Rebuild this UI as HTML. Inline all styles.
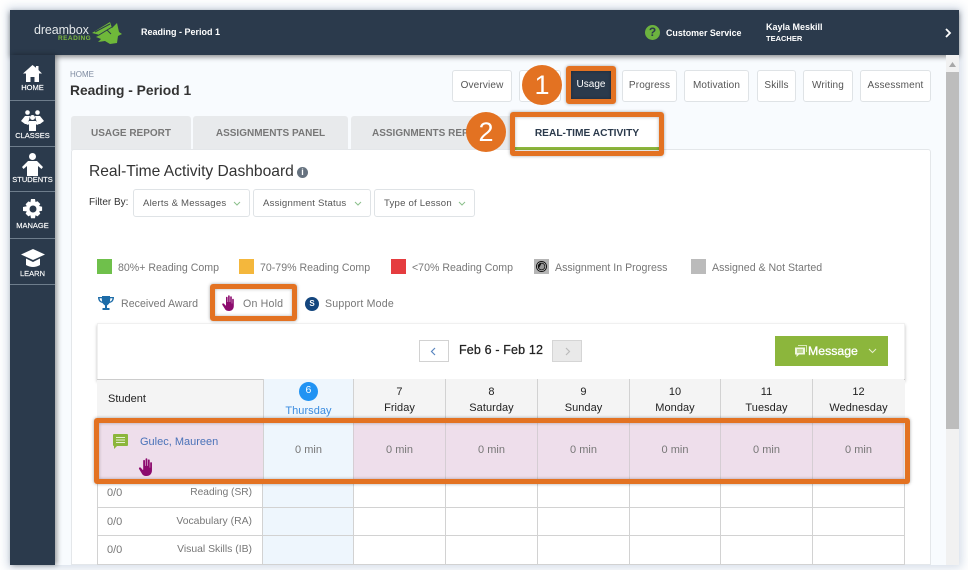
<!DOCTYPE html>
<html><head><meta charset="utf-8">
<style>
*{box-sizing:border-box}
html,body{margin:0;padding:0;width:968px;height:570px;overflow:hidden;background:#fff}
body{position:relative;font-family:"Liberation Sans",sans-serif;color:#555}
#w{position:absolute;left:0;top:0;width:968px;height:570px;filter:blur(.25px)}
.a{position:absolute}
.t{position:absolute;white-space:nowrap;line-height:16px}
.btn{position:absolute;top:70px;height:32px;background:#fff;border:1px solid #dfe3e6;border-radius:3px;font-size:10px;line-height:29px;text-align:center;color:#555;letter-spacing:.15px}
.tab{position:absolute;top:116px;height:34px;background:#e8eaec;border-radius:3px 3px 0 0;font-size:10px;font-weight:bold;line-height:36px;text-align:center;color:#777}
.side{position:absolute;left:10px;width:45px;color:#fff;font-size:7.5px;text-align:center;border-bottom:1px solid #6e7d8c;-webkit-text-stroke:.15px #fff}
.side span{position:absolute;left:0;right:0}
.f{position:absolute;top:189px;height:28px;background:#fff;border:1px solid #dfe3e6;border-radius:3px;font-size:9.6px;line-height:27px;color:#555;padding-left:9px;letter-spacing:.2px}
.f svg{position:absolute;top:11px}
.sw{position:absolute;top:259px;width:15px;height:15px}
.lg{position:absolute;top:260px;font-size:10.6px;line-height:16px;color:#777;white-space:nowrap}
.o{position:absolute;border:5px solid #e37222;border-radius:3px;box-shadow:0 0 3px rgba(0,0,0,.35),inset 0 0 3px rgba(0,0,0,.3)}
.c{position:absolute;width:40px;height:40px;border-radius:50%;background:#e37222;color:#fff;font-size:27px;line-height:40px;text-align:center}
.hc{position:absolute;top:379px;height:44px;background:#f4f4f4;border-left:1px solid #d2d2d2;text-align:center;font-size:11px;line-height:16px;color:#222;padding-top:5px;letter-spacing:.05px}
.pc{position:absolute;top:423px;height:60px;background:#eedeeb;border-left:1px solid #d5cdd3;text-align:center;font-size:11px;line-height:54px;color:#777}
.vl{position:absolute;top:483px;height:82px;width:1px;background:#d2d2d2}
.hl{position:absolute;left:97px;width:808px;height:1px;background:#d2d2d2}
</style></head>
<body>
<div id="w">
<div class="a" style="left:0;top:0;width:968px;height:570px;background:#fff"></div>
<div class="a" style="left:10px;top:10px;width:949px;height:555px;background:#f8fbfe;box-shadow:0 0 9px 3px rgba(180,195,215,.55)"></div>

<!-- header -->
<div class="a" style="left:10px;top:10px;width:949px;height:45px;background:#2b3a4c;box-shadow:0 2px 5px rgba(0,0,0,.45)"></div>
<div class="t" style="left:34px;top:22px;color:#e4e8ea;font-size:12.500px;letter-spacing:-.1px">dreambox</div>
<div class="t" style="left:58px;top:31px;color:#7cb83e;font-size:6.500px;font-weight:bold;letter-spacing:.45px">READING</div>
<svg class="a" style="left:92px;top:21px" width="30" height="24" viewBox="0 0 30 24"><path d="M0 12 18 1l2 6 5-5 2 9 3 2-4 2-1 7-7 1-5-3-7 1 3-3-5-2 4-2z" fill="#6fb83a"/><path d="M3 11 18 3M7 14 20 6M15 9l4 4" stroke="#2b3a4c" stroke-width="1" fill="none"/></svg>
<div class="t" style="left:141px;top:24px;color:#fff;font-size:9px;font-weight:bold">Reading - Period 1</div>
<div class="a" style="left:645px;top:25px;width:15px;height:15px;border-radius:50%;background:#6cb33f;color:#2b3a4c;font-size:12px;font-weight:bold;line-height:15px;text-align:center">?</div>
<div class="t" style="left:666px;top:25px;color:#fff;font-size:8.900px;font-weight:bold">Customer Service</div>
<div class="t" style="left:766px;top:19px;color:#fff;font-size:9px;font-weight:bold">Kayla Meskill</div>
<div class="t" style="left:766px;top:31px;color:#fff;font-size:7.500px;font-weight:bold">TEACHER</div>
<svg class="a" style="left:944px;top:28px" width="8" height="10" viewBox="0 0 8 10"><path d="M2 1l4 4-4 4" stroke="#fff" stroke-width="1.8" fill="none"/></svg>

<!-- sidebar -->
<div class="a" style="left:10px;top:55px;width:45px;height:510px;background:#2b3a4c;box-shadow:2px 0 5px rgba(0,0,0,.4)"></div>
<div class="side" style="top:55px;height:46px">
<svg class="a" style="left:13px;top:10px" width="19" height="17" viewBox="0 0 19 17"><path d="M9.500 0 0 8.500h3V17h4.500v-5h4v5H16V8.500h3L15.500 5V1H13v1.800z" fill="#fff"/></svg>
<span style="top:28px">HOME</span></div>
<div class="side" style="top:102px;height:45px">
<svg class="a" style="left:11px;top:8px" width="23" height="21" viewBox="0 0 23 21"><g fill="#fff"><circle cx="6.500" cy="2.500" r="2.300"/><circle cx="16.500" cy="2.500" r="2.300"/><circle cx="11.500" cy="7.500" r="2.500"/><path d="M4 6h5l-1 4-2 4H4L0 11zM14 6h5l4 5-4 3h-2l-2-4zM8 11h7l3 3-2 1-1-1v7H8v-7l-1 1-2-1z"/></g></svg>
<span style="top:29px">CLASSES</span></div>
<div class="side" style="top:147px;height:45px">
<svg class="a" style="left:12px;top:6px" width="21" height="24" viewBox="0 0 21 24"><circle cx="10.500" cy="3.500" r="3.500" fill="#fff"/><path d="M6 8h9l6 6-1.500 2-3.500-3v10H5V13l-3.500 3L0 14z" fill="#fff"/></svg>
<span style="top:28px">STUDENTS</span></div>
<div class="side" style="top:192px;height:47px">
<svg class="a" style="left:12.500px;top:7px" width="20" height="20" viewBox="0 0 20 20"><path d="M8 0h4l.5 3 2-.8 2.800 2.800-1.200 2 3 .8v4l-3 .6 1.200 2.200-2.800 2.800-2-1.200-.5 3H8l-.6-3-2 1.200-2.800-2.800 1.200-2.200L0 12V8l3.800-.8-1.200-2 2.800-2.800 2 .8zM10 6.500a3.500 3.500 0 1 0 0 7 3.500 3.500 0 0 0 0-7z" fill="#fff" fill-rule="evenodd"/></svg>
<span style="top:29px">MANAGE</span></div>
<div class="side" style="top:239px;height:46px">
<svg class="a" style="left:11px;top:10px" width="24" height="19" viewBox="0 0 24 19"><path d="M12 0 24 5.500 12 11 0 5.500z" fill="#fff"/><path d="M5 9.500 12 13l7-3.500V16q-7 4-14 0z" fill="#fff"/></svg>
<span style="top:30px">LEARN</span></div>

<!-- scrollbar -->
<div class="a" style="left:946px;top:55px;width:13px;height:510px;background:#f1f1f1"></div>
<div class="a" style="left:946px;top:72px;width:13px;height:357px;background:#bdbdbd"></div>
<svg class="a" style="left:949px;top:62px" width="7" height="5"><path d="M3.500 0 7 5H0z" fill="#a8a8a8"/></svg>

<!-- title -->
<div class="t" style="left:70px;top:67px;font-size:8px;color:#7d8aa0">HOME</div>
<div class="t" style="left:70px;top:83px;font-size:13.800px;font-weight:bold;color:#333">Reading - Period 1</div>

<div class="btn" style="left:452px;width:60px">Overview</div>
<div class="btn" style="left:519px;width:42px"></div>
<div class="a" style="left:571px;top:71px;width:40px;height:28px;background:#2b3a4c;color:#fff;font-size:10px;line-height:28px;text-align:center">Usage</div>
<div class="btn" style="left:622px;width:55px">Progress</div>
<div class="btn" style="left:684px;width:65px">Motivation</div>
<div class="btn" style="left:757px;width:39px">Skills</div>
<div class="btn" style="left:803px;width:50px">Writing</div>
<div class="btn" style="left:860px;width:71px">Assessment</div>

<!-- tabs -->
<div class="tab" style="left:71px;width:120px">USAGE REPORT</div>
<div class="tab" style="left:193px;width:155px">ASSIGNMENTS PANEL</div>
<div class="tab" style="left:351px;width:165px;text-align:left;padding-left:21px">ASSIGNMENTS REPORT</div>

<!-- panel -->
<div class="a" style="left:71px;top:149px;width:860px;height:416px;background:#fff;border:1px solid #e4e7ea;border-radius:3px 3px 0 0"></div>
<div class="a" style="left:515px;top:117px;width:144px;height:33px;background:#fff;border-bottom:3px solid #8cb63c;color:#2b3a4c;font-size:10.200px;font-weight:bold;text-align:center;line-height:33px">REAL-TIME ACTIVITY</div>

<div class="t" style="left:89px;top:163px;font-size:15.600px;line-height:18px;color:#333">Real-Time Activity Dashboard</div>
<div class="a" style="left:297px;top:167px;width:11px;height:11px;border-radius:50%;background:#66727f;color:#fff;font-size:9px;font-weight:bold;line-height:11px;text-align:center">i</div>
<div class="t" style="left:89px;top:195px;font-size:10px;color:#333">Filter By:</div>
<div class="f" style="left:133px;width:117px">Alerts &amp; Messages<svg style="left:99px" width="8" height="6"><path d="M1 1l3 3 3-3" stroke="#8cc08c" fill="none"/></svg></div>
<div class="f" style="left:253px;width:118px">Assignment Status<svg style="left:100px" width="8" height="6"><path d="M1 1l3 3 3-3" stroke="#8cc08c" fill="none"/></svg></div>
<div class="f" style="left:374px;width:101px">Type of Lesson<svg style="left:83px" width="8" height="6"><path d="M1 1l3 3 3-3" stroke="#8cc08c" fill="none"/></svg></div>

<!-- legend -->
<div class="sw" style="left:97px;background:#6fc04b"></div><div class="lg" style="left:118px">80%+ Reading Comp</div>
<div class="sw" style="left:239px;background:#f4b73c"></div><div class="lg" style="left:260px">70-79% Reading Comp</div>
<div class="sw" style="left:391px;background:#e53c3f"></div><div class="lg" style="left:412px">&lt;70% Reading Comp</div>
<div class="sw" style="left:534px;background:#b5b5b5"></div>
<svg class="a" style="left:536px;top:261px" width="11" height="11" viewBox="0 0 11 11"><circle cx="5.500" cy="5.500" r="5.500" fill="#111"/><circle cx="5.500" cy="5.500" r="4.200" fill="none" stroke="#ddd" stroke-width=".7"/><path d="M5.500 2.500a3 3 0 0 1 0 6 3 3 0 0 1-2.500-1.500z" fill="#999"/></svg>
<div class="lg" style="left:555px">Assignment In Progress</div>
<div class="sw" style="left:691px;background:#bbb"></div><div class="lg" style="left:712px">Assigned &amp; Not Started</div>

<svg class="a" style="left:98px;top:296px" width="16" height="15" viewBox="0 0 16 15"><path d="M4 0h8v1h4c0 4-2 5.500-4.500 6C10.500 8.500 9.500 9 9 9.500V12h2.500v2h-7v-2H7V9.500C6.500 9 5.500 8.500 4.500 7 2 6.500 0 5 0 1h4zM1.500 2.300c.2 1.700 1 2.800 2.600 3.300L3.700 2.300zm13 0h-2.200l-.4 3.300c1.600-.5 2.400-1.600 2.600-3.300z" fill="#1d6ca8" fill-rule="evenodd"/></svg>
<div class="lg" style="left:121px;top:296px;letter-spacing:.05px">Received Award</div>
<svg class="a" style="left:222px;top:295px" width="13" height="16" viewBox="0 0 13 16"><path d="M4 2.500a.8.800 0 0 1 1.600 0V7h.5V1a.8.800 0 0 1 1.600 0v6h.5V2a.8.800 0 0 1 1.600 0v6.500h.4V4.500a.8.800 0 0 1 1.600 0V11c0 3-2 5-4.800 5-2.500 0-3.600-1-4.400-2.600L.3 9.700c-.5-1.100 1-1.800 1.700-.9L3.500 10.500h.5z" fill="#8c0b6e"/></svg>
<div class="lg" style="left:243px;top:296px;letter-spacing:.2px">On Hold</div>
<div class="a" style="left:305px;top:297px;width:14px;height:14px;border-radius:50%;background:#14467e;color:#fff;font-size:8px;font-weight:bold;line-height:14px;text-align:center">S</div>
<div class="lg" style="left:325px;top:296px;letter-spacing:.2px">Support Mode</div>

<!-- date nav -->
<div class="a" style="left:97px;top:323px;width:808px;height:57px;background:#fff;border:1px solid #f0f0f0;box-shadow:0 2px 3px rgba(0,0,0,.25)"></div>
<div class="a" style="left:419px;top:340px;width:30px;height:22px;background:#fff;border:1px solid #d2d2d2"></div>
<svg class="a" style="left:430px;top:347px" width="7" height="9"><path d="M5 1 1.500 4.500 5 8" stroke="#5a86c0" stroke-width="1.200" fill="none"/></svg>
<div class="t" style="left:459px;top:342px;font-size:12.500px;color:#222;letter-spacing:.15px;-webkit-text-stroke:.25px #222">Feb 6 - Feb 12</div>
<div class="a" style="left:552px;top:340px;width:30px;height:22px;background:#e9e9e9;border:1px solid #d5d5d5"></div>
<svg class="a" style="left:564px;top:347px" width="7" height="9"><path d="M2 1 5.500 4.500 2 8" stroke="#bbb" stroke-width="1.200" fill="none"/></svg>
<div class="a" style="left:775px;top:336px;width:113px;height:30px;background:#8cb63c"></div>
<svg class="a" style="left:795px;top:345px" width="12" height="12" viewBox="0 0 12 12"><path d="M3 0h9v7h-1V1H3z" fill="#d8e8b8"/><path d="M0 2.500h10v7H4L1.500 12V9.500H0z" fill="#f0f6e0"/><path d="M2 5h6M2 7h6" stroke="#8cb63c"/></svg>
<div class="t" style="left:808px;top:343px;color:#fff;font-size:12.300px;-webkit-text-stroke:.3px #fff">Message</div>
<svg class="a" style="left:868px;top:348px" width="9" height="6"><path d="M1 1l3.500 3.500L8 1" stroke="#e8f0d0" fill="none"/></svg>

<!-- table -->
<div class="a" style="left:97px;top:379px;width:808px;height:44px;background:#f4f4f4;border-top:1px solid #ccc"></div>
<div class="t" style="left:108px;top:391px;font-size:11px;color:#222">Student</div>
<div class="hc" style="left:263px;width:90px;background:#eef6fd;color:#3b8ce0;padding-top:4px">
<div style="width:19px;height:19px;border-radius:50%;background:#2193f3;color:#fff;margin:-1px auto 0;line-height:17px;font-size:10.500px">6</div><div style="margin-top:2px">Thursday</div></div>
<div class="hc" style="left:353px;width:92px">7<br>Friday</div>
<div class="hc" style="left:445px;width:92px">8<br>Saturday</div>
<div class="hc" style="left:537px;width:92px">9<br>Sunday</div>
<div class="hc" style="left:629px;width:91px">10<br>Monday</div>
<div class="hc" style="left:720px;width:92px">11<br>Tuesday</div>
<div class="hc" style="left:812px;width:92px;border-right:0">12<br>Wednesday</div>

<div class="a" style="left:97px;top:423px;width:166px;height:60px;background:#eedeeb"></div>
<svg class="a" style="left:113px;top:434px" width="15" height="15" viewBox="0 0 15 15"><path d="M1 0h13a1 1 0 0 1 1 1v10a1 1 0 0 1-1 1H4l-3 3V12H1a1 1 0 0 1-1-1V1a1 1 0 0 1 1-1z" fill="#8cb63c"/><path d="M3 3.500h9M3 6h9M3 8.500h9" stroke="#e6f0d2"/></svg>
<div class="t" style="left:140px;top:434px;font-size:11px;color:#4a72b8">Gulec, Maureen</div>
<svg class="a" style="left:138px;top:458px" width="16" height="18" viewBox="0 0 13 16"><path d="M4 2.500a.8.800 0 0 1 1.600 0V7h.5V1a.8.800 0 0 1 1.600 0v6h.5V2a.8.800 0 0 1 1.600 0v6.500h.4V4.500a.8.800 0 0 1 1.600 0V11c0 3-2 5-4.800 5-2.500 0-3.600-1-4.400-2.600L.3 9.700c-.5-1.100 1-1.800 1.700-.9L3.500 10.500h.5z" fill="#8c0b6e"/></svg>
<div class="pc" style="left:263px;width:90px;background:#eef6fd;border-left:1px solid #d2d2d2">0 min</div>
<div class="pc" style="left:353px;width:92px">0 min</div>
<div class="pc" style="left:445px;width:92px">0 min</div>
<div class="pc" style="left:537px;width:92px">0 min</div>
<div class="pc" style="left:629px;width:91px">0 min</div>
<div class="pc" style="left:720px;width:92px">0 min</div>
<div class="pc" style="left:812px;width:92px">0 min</div>

<div class="a" style="left:263px;top:483px;width:90px;height:82px;background:#eef6fd"></div>
<div class="hl" style="top:507px"></div><div class="hl" style="top:535px"></div><div class="hl" style="top:564px"></div>
<div class="vl" style="left:97px"></div><div class="vl" style="left:262px"></div><div class="vl" style="left:353px"></div><div class="vl" style="left:445px"></div><div class="vl" style="left:537px"></div><div class="vl" style="left:629px"></div><div class="vl" style="left:720px"></div><div class="vl" style="left:812px"></div><div class="vl" style="left:904px"></div>

<div class="t" style="left:107px;top:485px;font-size:11px;color:#777">0/0</div>
<div class="t" style="left:107px;top:514px;font-size:11px;color:#777">0/0</div>
<div class="t" style="left:107px;top:542px;font-size:11px;color:#777">0/0</div>
<div class="t" style="right:716px;top:485px;font-size:10.200px;color:#777">Reading (SR)</div>
<div class="t" style="right:716px;top:514px;font-size:10.400px;color:#777">Vocabulary (RA)</div>
<div class="t" style="right:716px;top:542px;font-size:10.400px;color:#777">Visual Skills (IB)</div>

<!-- annotations -->
<div class="o" style="left:566px;top:66px;width:50px;height:38px"></div>
<div class="o" style="left:510px;top:112px;width:154px;height:44px"></div>
<div class="o" style="left:210px;top:284px;width:87px;height:37px"></div>
<div class="o" style="left:94px;top:418px;width:816px;height:66px"></div>
<div class="c" style="left:522px;top:65px">1</div>
<div class="c" style="left:466px;top:112px">2</div>
</div>
</body></html>
